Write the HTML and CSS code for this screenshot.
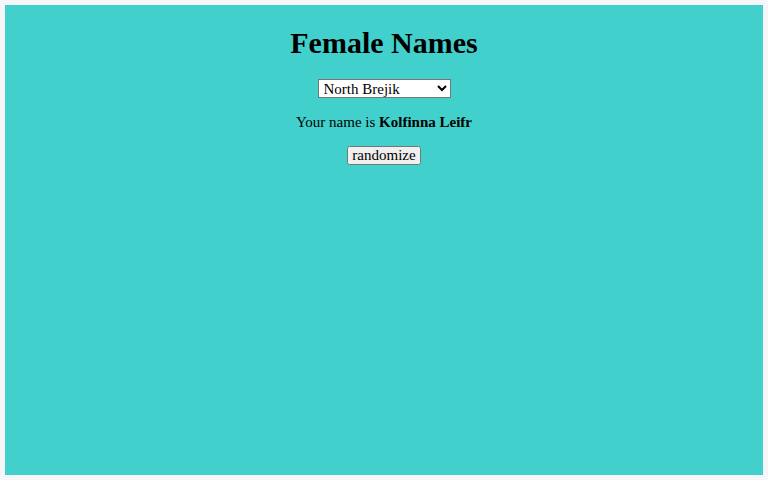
FILE: index.html
```html
<!DOCTYPE html>
<html>
<head>
<meta charset="utf-8">
<link rel="stylesheet" href="styles.css">
</head>
<body>
<div class="page">
  <h1 class="title">Female Names</h1>
  <div class="row">
    <select class="region">
      <option>North Brejik</option>
      <option>South Brejik</option>
    </select>
  </div>
  <p class="result">Your name is <b>Kolfinna Leifr</b></p>
  <div class="row2">
    <button class="rand">randomize</button>
  </div>
</div>
</body>
</html>
```
FILE: styles.css
```css
html { background: #f6f6f8; }
body {
  margin: 5px;
  font-family: "Liberation Serif", serif;
}
.page {
  height: 470px;
  background: #42d0cc;
  text-align: center;
  overflow: hidden;
}
.title {
  font-size: 30px;
  margin: 0;
  padding-top: 20px;
  line-height: 35px;
}
.row { margin-top: 19px; height: 19px; }
.region {
  display: block;
  margin: 0 auto;
  width: 133px;
  height: 19px;
  padding: 0 1px;
  font-family: "Liberation Serif", serif;
  font-size: 15px;
  line-height: 17px;
  background: #fff;
}
.result {
  font-size: 15px;
  line-height: 17px;
  margin: 16px 0 0;
}
.row2 { margin-top: 15px; }
.rand {
  display: block;
  margin: 0 auto;
  height: 19px;
  padding: 0 3px;
  font-family: "Liberation Serif", serif;
  font-size: 15px;
  line-height: 15px;
}
```
